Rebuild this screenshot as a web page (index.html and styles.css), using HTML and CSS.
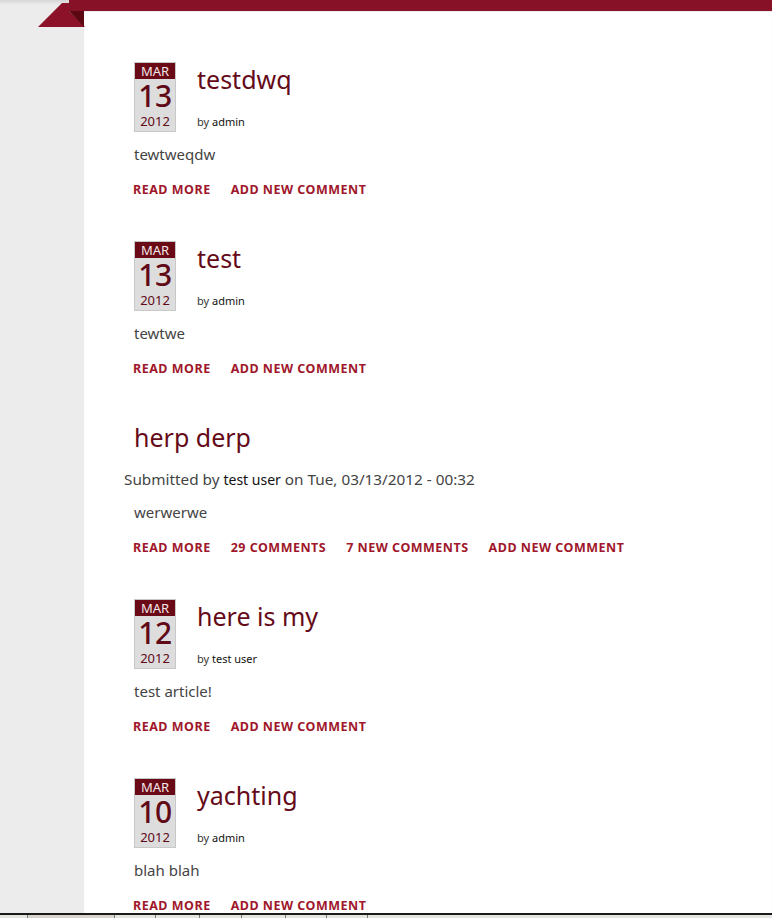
FILE: index.html
```html
<!DOCTYPE html>
<html>
<head>
<meta charset="utf-8">
<link rel="stylesheet" href="styles.css">
</head>
<body>
<div class="page">
  <svg class="ribbon" width="86" height="28" viewBox="0 0 86 28">
    <polygon points="38,27 62,3 69,3 69,11 85,27" fill="#8b1228"/>
    <polygon points="69,11 84,11 84,27" fill="#5c0812"/>
  </svg>
  <div class="topline">
    <div class="topgap"></div>
    <div class="topbar"></div>
  </div>
  <div class="layout">
    <div class="sidebar"></div>
    <main class="main">
      <article class="node">
        <div class="node-head">
          <div class="date"><span class="mon">MAR</span><span class="day">13</span><span class="yr">2012</span></div>
          <div class="head-text">
            <h2 class="title">testdwq</h2>
            <div class="by">by <span class="user">admin</span></div>
          </div>
        </div>
        <p class="body">tewtweqdw</p>
        <ul class="links"><li>Read more</li><li>Add new comment</li></ul>
      </article>
      <article class="node">
        <div class="node-head">
          <div class="date"><span class="mon">MAR</span><span class="day">13</span><span class="yr">2012</span></div>
          <div class="head-text">
            <h2 class="title">test</h2>
            <div class="by">by <span class="user">admin</span></div>
          </div>
        </div>
        <p class="body">tewtwe</p>
        <ul class="links"><li>Read more</li><li>Add new comment</li></ul>
      </article>
      <article class="node plain">
        <h2 class="title">herp derp</h2>
        <div class="submitted">Submitted by <span class="user">test user</span> on Tue, 03/13/2012 - 00:32</div>
        <p class="body">werwerwe</p>
        <ul class="links"><li>Read more</li><li>29 comments</li><li>7 new comments</li><li>Add new comment</li></ul>
      </article>
      <article class="node">
        <div class="node-head">
          <div class="date"><span class="mon">MAR</span><span class="day">12</span><span class="yr">2012</span></div>
          <div class="head-text">
            <h2 class="title">here is my</h2>
            <div class="by">by <span class="user">test user</span></div>
          </div>
        </div>
        <p class="body">test article!</p>
        <ul class="links"><li>Read more</li><li>Add new comment</li></ul>
      </article>
      <article class="node">
        <div class="node-head">
          <div class="date"><span class="mon">MAR</span><span class="day">10</span><span class="yr">2012</span></div>
          <div class="head-text">
            <h2 class="title">yachting</h2>
            <div class="by">by <span class="user">admin</span></div>
          </div>
        </div>
        <p class="body">blah blah</p>
        <ul class="links"><li>Read more</li><li>Add new comment</li></ul>
      </article>
    </main>
  </div>
  <div class="statusbar">
    <span class="seg s1"></span><span class="seg s2"></span><span class="seg s3"></span><span class="seg s4"></span><span class="seg s5"></span><span class="seg s6"></span><span class="seg s7"></span><span class="seg s8"></span>
  </div>
</div>
</body>
</html>
```

FILE: styles.css
```css
html, body {
  margin: 0;
  padding: 0;
  background: #ececec;
  font-family: "Noto Sans", "Open Sans", sans-serif;
  overflow: hidden;
}
.page {
  position: relative;
  width: 772px;
  height: 918px;
  overflow: hidden;
}
.ribbon {
  position: absolute;
  left: 0;
  top: 0;
  z-index: 2;
}
.topline {
  display: flex;
  height: 11px;
  background: linear-gradient(#d6d6d6, #ececec 5px);
}
.topgap {
  width: 69px;
}
.topbar {
  flex: 1;
  background: #871126;
}
.layout {
  display: flex;
}
.sidebar {
  width: 84px;
  flex: none;
}
.main {
  flex: 1;
  background: #fff;
  padding: 51px 0 0 50px;
  min-height: 1000px;
  box-shadow: inset 0 1px 1px rgba(0,0,0,0.08);
}
.node {
  height: 179px;
}
.node-head {
  display: flex;
  gap: 21px;
}
.date {
  width: 40px;
  height: 68px;
  background: #dddddd;
  border: 1px solid #c8c8c8;
  display: flex;
  flex-direction: column;
  align-items: center;
  color: #610a17;
}
.mon {
  display: block;
  width: 40px;
  height: 16px;
  background: #6a0a16;
  color: #f3e6e8;
  font-size: 13px;
  line-height: 16px;
  text-align: center;
}
.day {
  margin-top: 2px;
  font-size: 30px;
  line-height: 30px;
  font-weight: 500;
  letter-spacing: -0.5px;
}
.yr {
  margin-top: 2px;
  font-size: 13px;
  line-height: 17px;
}
.head-text {
  display: flex;
  flex-direction: column;
}
.title {
  margin: 0;
  font-size: 25px;
  font-weight: normal;
  color: #650a18;
  line-height: 34px;
}
.by {
  margin-top: 19px;
  font-size: 11px;
  color: #333;
  line-height: 14px;
}
.user {
  color: #111;
}
.body {
  margin: 12px 0 0 0;
  font-size: 15px;
  line-height: 20px;
  color: #444;
}
.links {
  list-style: none;
  margin: 19px 0 0 -1px;
  padding: 0;
  display: flex;
  gap: 20px;
  font-size: 12.5px;
  letter-spacing: 0.5px;
  font-weight: bold;
  text-transform: uppercase;
  color: #a0172b;
  line-height: 14px;
}
.plain .title {
  line-height: 34px;
  margin-top: 0;
}
.plain .submitted {
  margin: 15px 0 0 -10px;
  font-size: 15.3px;
  color: #444;
  line-height: 20px;
}
.plain .submitted .user {
  color: #111;
  font-size: 14px;
}
.plain .body {
  margin-top: 12px;
}
.plain .links {
  margin-top: 19px;
}
.statusbar {
  position: fixed;
  left: 0;
  right: 0;
  bottom: 0;
  height: 3px;
  border-top: 2px solid #1a1a1a;
  background: #e4e4e0;
  display: flex;
  z-index: 3;
}
.seg {
  border-right: 1px solid #777;
  height: 3px;
}
.s1 { width: 27px; }
.s2 { width: 86px; background: #d8d6cc; }
.s3 { width: 40px; }
.s4 { width: 43px; }
.s5 { width: 41px; }
.s6 { width: 43px; }
.s7 { width: 40px; }
.s8 { width: 40px; }
```
